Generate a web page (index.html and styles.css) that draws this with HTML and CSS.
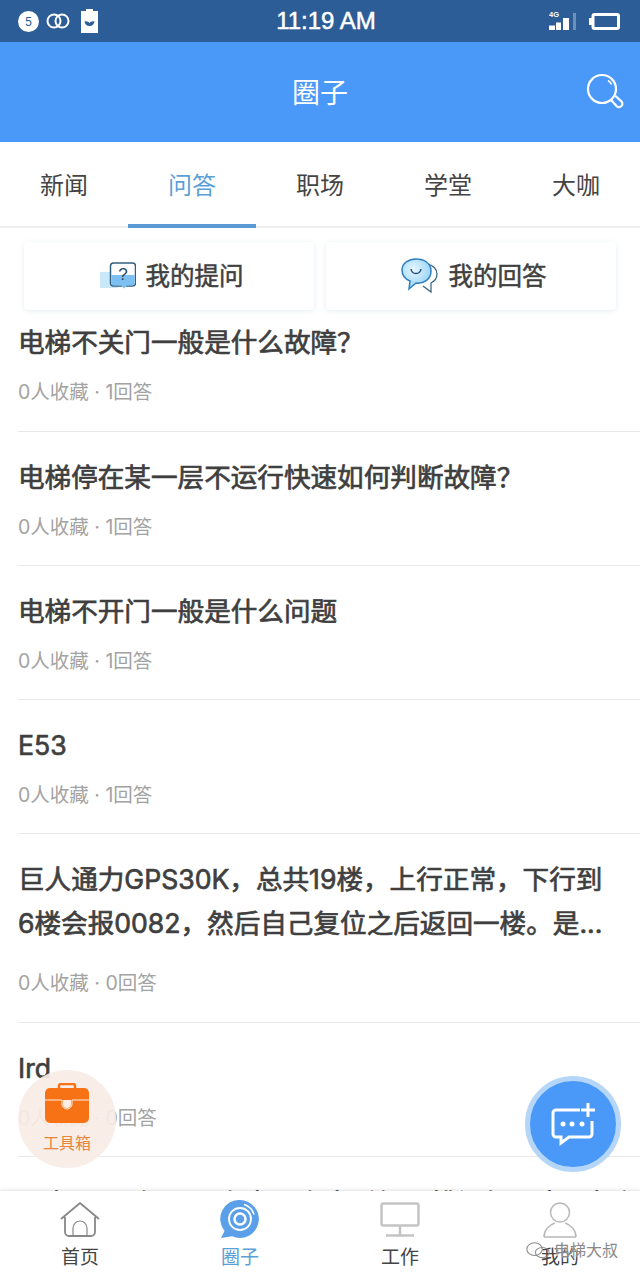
FILE: index.html
```html
<!DOCTYPE html>
<html lang="zh-CN">
  <head>
    <meta charset="UTF-8" />
    <meta name="viewport" content="width=device-width, initial-scale=1.0" />
    <title>圈子</title>
    <link rel="stylesheet" href="styles.css">
  </head>

  <body>
    <div id="app">
      <div class="status-bar">
        <div class="status-left">
          <span class="badge-five">5</span>
          <svg width="24" height="16" viewBox="0 0 24 16" fill="none" stroke="#fff" stroke-width="2"><circle cx="8" cy="8" r="6.5"/><circle cx="16" cy="8" r="6.5"/></svg>
          <svg width="17" height="24" viewBox="0 0 17 24"><path d="M5 0h7v2h5v22H0V2h5z" fill="#fff"/><path d="M8.500 17c-3 0-4.500-2-5-4.500 2.500-.5 4 .5 5 1.500 1-1 2.500-2 5-1.500-.5 2.500-2 4.500-5 4.500z" fill="#2c5d97"/></svg>
        </div>
        <div class="status-time">11:19 AM</div>
        <div class="status-right">
          <svg width="28" height="22" viewBox="0 0 28 22"><text x="0" y="7" font-size="7.500" font-weight="700" fill="#fff" font-family="Liberation Sans">4G</text><rect x="0" y="15.500" width="6" height="4.500" fill="#fff"/><rect x="7" y="12.500" width="5" height="7.500" fill="#fff"/><rect x="14" y="8" width="6" height="12" fill="#fff"/><rect x="24" y="3" width="3" height="17" fill="#6d90bb"/></svg>
          <svg width="31" height="20" viewBox="0 0 31 20"><rect x="0" y="7" width="3" height="7" fill="#fff"/><rect x="4" y="3.500" width="25.500" height="14" rx="1.500" fill="none" stroke="#fff" stroke-width="3"/></svg>
        </div>
      </div>

      <header class="title-bar">
        <h1>圈子</h1>
        <svg class="search-icon" width="40" height="40" viewBox="0 0 40 40" fill="none" stroke="#fff" stroke-width="2.200"><circle cx="16" cy="16" r="14"/><path d="M22 7.500a9 9 0 0 1 3.500 4" stroke-width="1.500"/><path d="M25 27l5.500 6a3 3 0 0 0 5-4.500l-6-5.500"/></svg>
      </header>

      <nav class="tabs">
        <a class="tab">新闻</a>
        <a class="tab active">问答</a>
        <a class="tab">职场</a>
        <a class="tab">学堂</a>
        <a class="tab">大咖</a>
      </nav>

      <main class="content">
        <div class="my-buttons">
          <div class="my-button">
            <svg width="36" height="28" viewBox="0 0 36 28"><rect x="0" y="10" width="18" height="16" fill="#c9e8f9"/><rect x="10.500" y="1" width="25" height="23" rx="3" fill="#fff" stroke="#33607f" stroke-width="1.500"/><path d="M11.300 13h23.400v8a2.500 2.500 0 0 1-2.500 2.500H27l-3 3-3-3h-7.200a2.500 2.500 0 0 1-2.500-2.500z" fill="#7cc0f2"/><text x="23" y="18" text-anchor="middle" font-size="17" fill="#2b4a66" font-family="Liberation Sans">?</text></svg>
            <span>我的提问</span>
          </div>
          <div class="my-button">
            <svg width="38" height="36" viewBox="0 0 38 36"><defs><radialGradient id="bubble" cx="0.4" cy="0.35" r="0.7"><stop offset="0" stop-color="#e6f6fe"/><stop offset="1" stop-color="#8fd0f6"/></radialGradient></defs><path d="M26 6c6 1 10 5 10 10 0 4-2 7-6 9l0 9-8-6" fill="#fff" stroke="#33607f" stroke-width="1.200"/><path d="M15 1c8 0 15 4 15 12 0 8-7 13-15 12l-7 6 1-8C4 21 1 17 1 12 1 5 8 1 15 1z" fill="url(#bubble)" stroke="#2f7fc0" stroke-width="1.500"/><path d="M10 11c1 6 9 6 10 0" fill="none" stroke="#27506f" stroke-width="1.500"/></svg>
            <span>我的回答</span>
          </div>
        </div>

        <ul class="question-list">
          <li class="question">
            <div class="question-title">电梯不关门一般是什么故障&#xFF1F;</div>
            <div class="question-meta">0人收藏 · 1回答</div>
          </li>
          <li class="question">
            <div class="question-title">电梯停在某一层不运行快速如何判断故障&#xFF1F;</div>
            <div class="question-meta">0人收藏 · 1回答</div>
          </li>
          <li class="question">
            <div class="question-title">电梯不开门一般是什么问题</div>
            <div class="question-meta">0人收藏 · 1回答</div>
          </li>
          <li class="question">
            <div class="question-title">E53</div>
            <div class="question-meta">0人收藏 · 1回答</div>
          </li>
          <li class="question question-long">
            <div class="question-title">巨人通力GPS30K&#xFF0C;总共19楼&#xFF0C;上行正常&#xFF0C;下行到<br>6楼会报0082&#xFF0C;然后自己复位之后返回一楼。是...</div>
            <div class="question-meta">0人收藏 · 0回答</div>
          </li>
          <li class="question">
            <div class="question-title">Ird</div>
            <div class="question-meta">0人收藏 · 0回答</div>
          </li>
          <li class="question">
            <div class="question-title">通力3000轿厢不上电&#xFF0C;上电后轿厢排门灯不亮&#xFF0C;如何</div>
          </li>
        </ul>
      </main>

      <footer class="bottom-nav">
        <a class="nav-item">
          <svg width="40" height="36" viewBox="0 0 40 36" fill="none" stroke="#888" stroke-width="1.800"><path d="M1 17L20 1l19 16"/><path d="M5 15v15a4 4 0 0 0 4 4h22a4 4 0 0 0 4-4V15"/><path d="M13 34v-8a7 7 0 0 1 14 0v8" stroke-width="1.200"/></svg>
          <span>首页</span>
        </a>
        <a class="nav-item active">
          <svg width="40" height="38" viewBox="0 0 40 38"><path d="M20 0a19 19 0 1 1-8 36.300L1 38l3.500-7A19 19 0 0 1 20 0z" fill="#5b9fe8"/><circle cx="20" cy="19" r="11" fill="none" stroke="#fff" stroke-width="1.800"/><circle cx="20" cy="19" r="5.500" fill="none" stroke="#fff" stroke-width="2.500"/><path d="M24 4.500a15 15 0 0 1 10 10" fill="none" stroke="#fff" stroke-width="1.500"/></svg>
          <span>圈子</span>
        </a>
        <a class="nav-item">
          <svg width="40" height="36" viewBox="0 0 40 36" fill="none" stroke="#c4c4c4" stroke-width="2.500"><rect x="1.500" y="1.500" width="37" height="22" rx="2"/><path d="M20 24v9"/><path d="M6 33.500h28"/></svg>
          <span>工作</span>
        </a>
        <a class="nav-item">
          <svg width="36" height="36" viewBox="0 0 36 36" fill="none" stroke="#b8b8b8" stroke-width="1.500"><circle cx="18" cy="10.500" r="9.500"/><path d="M2 35c0-7 5-12 11-14M34 35c0-7-5-12-11-14M2 35h32"/></svg>
          <span>我的</span>
        </a>
      </footer>

      <div class="toolbox">
        <svg width="44" height="40" viewBox="0 0 44 40"><path d="M14 6V3a2 2 0 0 1 2-2h12a2 2 0 0 1 2 2v3" fill="none" stroke="#f77214" stroke-width="2.500"/><path d="M5 5h34a5 5 0 0 1 5 5v25a5 5 0 0 1-5 5H5a5 5 0 0 1-5-5V10a5 5 0 0 1 5-5z" fill="#f77214"/><path d="M0 17h17v4a5 5 0 0 0 10 0v-4h17" fill="none" stroke="#fdeee3" stroke-width="1"/><path d="M18 17h8v4a4 4 0 0 1-8 0z" fill="#fdeee3"/></svg>
        <span>工具箱</span>
      </div>

      <div class="fab">
        <svg width="46" height="44" viewBox="0 0 46 44" fill="none" stroke="#fff" stroke-width="3"><path d="M30 8H6a3 3 0 0 0-3 3v21a3 3 0 0 0 3 3h5v6l8-6h20a3 3 0 0 0 3-3V19"/><path d="M38 1v14M31 8h14"/><circle cx="13" cy="22" r="2.500" fill="#fff" stroke="none"/><circle cx="22" cy="22" r="2.500" fill="#fff" stroke="none"/><circle cx="32" cy="22" r="2.500" fill="#fff" stroke="none"/></svg>
      </div>

      <div class="watermark">
        <svg width="24" height="18" viewBox="0 0 28 20" fill="none" stroke="#8a8a8a" stroke-width="1.200"><ellipse cx="10" cy="9" rx="9" ry="7.500"/><ellipse cx="19" cy="13" rx="8" ry="6"/></svg>
        <span>电梯大叔</span>
      </div>
    </div>
  </body>
</html>
```

FILE: styles.css
```css
* {
  box-sizing: border-box;
}

body {
  margin: 0;
  background: #fff;
  font-family: Inter, "Noto Sans CJK SC", sans-serif;
}

#app {
  position: relative;
  width: 640px;
  height: 1280px;
  display: flex;
  flex-direction: column;
  overflow: hidden;
}

.status-bar {
  height: 42px;
  flex-shrink: 0;
  display: flex;
  align-items: center;
  justify-content: space-between;
  padding: 0 20px 0 18px;
  background: #2c5d97;
  color: #fff;
}

.status-left,
.status-right {
  width: 200px;
  display: flex;
  align-items: center;
  gap: 7px;
}

.status-left {
  width: 214px;
}

.status-left svg:last-child {
  margin-left: 4px;
}

.status-right {
  justify-content: flex-end;
  gap: 12px;
}

.badge-five {
  width: 21px;
  height: 21px;
  border-radius: 50%;
  background: #fff;
  color: #2c5d97;
  font-size: 12px;
  line-height: 21px;
  text-align: center;
}

.status-time {
  font-family: "Liberation Sans", sans-serif;
  font-size: 24px;
  -webkit-text-stroke: 0.5px #fff;
}

.title-bar {
  position: relative;
  height: 100px;
  flex-shrink: 0;
  display: flex;
  align-items: center;
  justify-content: center;
  padding-bottom: 2px;
  background: #4a99f9;
}

.title-bar h1 {
  margin: 0;
  color: #fff;
  font-size: 28px;
  font-weight: 400;
}

.search-icon {
  position: absolute;
  right: 14px;
  top: 31px;
}

.tabs {
  height: 86px;
  flex-shrink: 0;
  display: flex;
  border-bottom: 2px solid #eeeeee;
}

.tab {
  flex: 1;
  height: 86px;
  line-height: 88px;
  text-align: center;
  font-size: 24px;
  color: #444;
}

.tab.active {
  color: #5b9fd8;
  border-bottom: 4px solid #5b9bd5;
}

.content {
  flex: 1;
  min-height: 0;
  overflow: hidden;
}

.my-buttons {
  display: flex;
  gap: 12px;
  padding: 14px 24px 0;
}

.my-button {
  flex: 1;
  height: 68px;
  display: flex;
  align-items: center;
  justify-content: center;
  gap: 10px;
  padding-left: 5px;
  border-radius: 4px;
  background: #fff;
  box-shadow: 0 1px 5px rgba(90, 140, 170, 0.16);
  font-size: 24.500px;
  color: #404040;
  -webkit-text-stroke: 0.5px #404040;
}

.my-button span {
  margin-top: -4px;
}

.question-list {
  margin: 0;
  padding: 0 0 0 18px;
  list-style: none;
}

.question {
  height: 134px;
  padding-top: 23px;
  border-bottom: 1px solid #e8e8e8;
}

.question:first-child {
  height: 122px;
  padding-top: 10px;
}

.question:last-child {
  padding-top: 24px;
}

.question-long {
  height: 189px;
}

.question-title {
  font-size: 26.600px;
  line-height: 44px;
  white-space: nowrap;
  color: #3f3f3f;
  -webkit-text-stroke: 0.7px #3f3f3f;
}

.question-meta {
  margin-top: 16px;
  font-size: 19.500px;
  line-height: 24px;
  color: #a3a3a3;
}

.question-long .question-meta {
  margin-top: 26px;
}

.bottom-nav {
  height: 89px;
  flex-shrink: 0;
  display: flex;
  background: #fff;
  box-shadow: 0 -1px 3px rgba(0, 0, 0, 0.12);
  z-index: 1;
}

.nav-item {
  flex: 1;
  display: flex;
  flex-direction: column;
  align-items: center;
  justify-content: flex-end;
  gap: 8px;
  padding-bottom: 10px;
  font-size: 19px;
  line-height: 24px;
  color: #444;
}

.nav-item.active {
  color: #5b9fd8;
}

.toolbox {
  position: absolute;
  left: 18px;
  top: 1070px;
  width: 98px;
  height: 98px;
  display: flex;
  flex-direction: column;
  align-items: center;
  padding-top: 13px;
  gap: 9px;
  border-radius: 50%;
  background: rgba(248, 236, 230, 0.92);
  color: #e8853a;
  font-size: 16px;
  line-height: 22px;
}

.fab {
  position: absolute;
  left: 525px;
  top: 1076px;
  width: 96px;
  height: 96px;
  display: flex;
  align-items: center;
  justify-content: center;
  border-radius: 50%;
  background: #4a99f9;
  border: 5px solid #b5d6f7;
  z-index: 2;
}

.watermark {
  position: absolute;
  left: 526px;
  top: 1238px;
  display: flex;
  align-items: center;
  gap: 4px;
  color: #8a8a8a;
  font-size: 16px;
  line-height: 24px;
  text-shadow: 0 0 2px #fff;
  z-index: 2;
}
```
